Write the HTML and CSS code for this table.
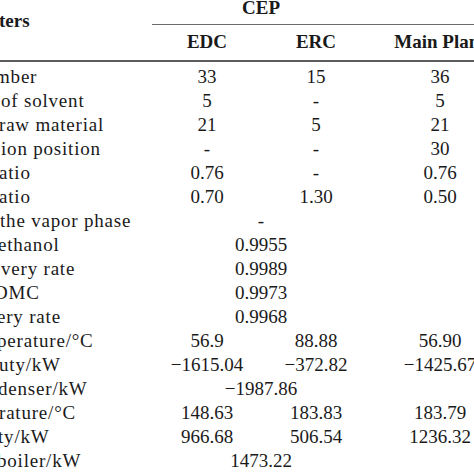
FILE: index.html
```html
<!DOCTYPE html>
<html lang="en">
<head>
<meta charset="utf-8">
<title>Parameters of the CEP</title>
<link rel="stylesheet" href="styles.css">
</head>
<body>
<table class="params">
  <colgroup>
    <col class="c-label">
    <col class="c-edc">
    <col class="c-erc">
    <col class="c-main">
  </colgroup>
  <thead>
    <tr>
      <th class="h-label" rowspan="2">ters</th>
      <th class="h-group" colspan="2">CEP</th>
      <th class="h-group"></th>
    </tr>
    <tr>
      <th class="h-col">EDC</th>
      <th class="h-col">ERC</th>
      <th class="h-col">Main Plant</th>
    </tr>
  </thead>
  <tbody>
    <tr><td class="label cut-5">mber</td><td>33</td><td>15</td><td>36</td></tr>
    <tr><td class="label in-1">of solvent</td><td>5</td><td>-</td><td>5</td></tr>
    <tr><td class="label cut-1">raw material</td><td>21</td><td>5</td><td>21</td></tr>
    <tr><td class="label in-1">ion position</td><td>-</td><td>-</td><td>30</td></tr>
    <tr><td class="label cut-1">atio</td><td>0.76</td><td>-</td><td>0.76</td></tr>
    <tr><td class="label cut-1">atio</td><td>0.70</td><td>1.30</td><td>0.50</td></tr>
    <tr><td class="label">the vapor phase</td><td colspan="2">-</td><td></td></tr>
    <tr><td class="label cut-2">ethanol</td><td colspan="2">0.9955</td><td></td></tr>
    <tr><td class="label in-1">very rate</td><td colspan="2">0.9989</td><td></td></tr>
    <tr><td class="label cut-6">DMC</td><td colspan="2">0.9973</td><td></td></tr>
    <tr><td class="label cut-3">ery rate</td><td colspan="2">0.9968</td><td></td></tr>
    <tr><td class="label cut-3">perature/°C</td><td>56.9</td><td>88.88</td><td>56.90</td></tr>
    <tr><td class="label cut-1">uty/kW</td><td>−1615.04</td><td>−372.82</td><td>−1425.67</td></tr>
    <tr><td class="label cut-2">denser/kW</td><td colspan="2">−1987.86</td><td></td></tr>
    <tr><td class="label cut-1">rature/°C</td><td>148.63</td><td>183.83</td><td>183.79</td></tr>
    <tr><td class="label cut-2">ty/kW</td><td>966.68</td><td>506.54</td><td>1236.32</td></tr>
    <tr><td class="label cut-3">boiler/kW</td><td colspan="2">1473.22</td><td></td></tr>
  </tbody>
</table>
</body>
</html>
```

FILE: styles.css
```css
html, body {
  margin: 0;
  padding: 0;
  overflow: hidden;
  background: #ffffff;
}

body {
  font-family: "Liberation Serif", "Times New Roman", serif;
  font-size: 19px;
  color: #1a1a1a;
}

.params {
  border-collapse: collapse;
  table-layout: fixed;
  width: 510px;
}

.c-label { width: 152px; }
.c-edc { width: 110px; }
.c-erc { width: 108px; }
.c-main { width: 140px; }

.params th,
.params td {
  padding: 0;
  line-height: 24px;
  white-space: nowrap;
  text-align: center;
  font-weight: normal;
}

.params th {
  font-weight: bold;
}

.params th.h-label {
  text-align: left;
  vertical-align: top;
  padding-top: 9px;
  text-indent: -1px;
  border-bottom: 2px solid #5c5c5c;
}

.params th.h-group {
  line-height: 16px;
  padding-bottom: 8px;
  border-bottom: 1px solid #6a6a6a;
}

.params th.h-col {
  padding-top: 5px;
  padding-bottom: 6px;
  border-bottom: 2px solid #5c5c5c;
}

.params tbody tr:first-child td {
  padding-top: 3px;
}

.params td.label {
  text-align: left;
  letter-spacing: 0.8px;
}

.params td.cut-1 { text-indent: -1px; }
.params td.cut-2 { text-indent: -2px; }
.params td.cut-3 { text-indent: -3px; }
.params td.cut-5 { text-indent: -5px; }
.params td.cut-6 { text-indent: -6px; }
.params td.in-1 { text-indent: 1px; }
```
